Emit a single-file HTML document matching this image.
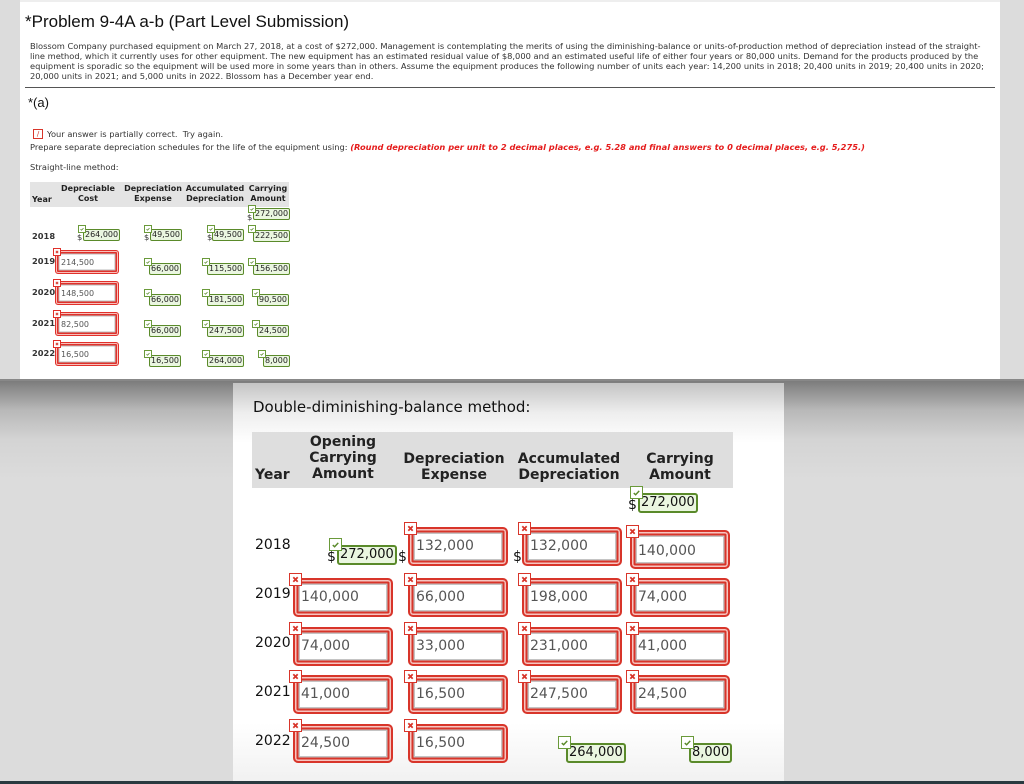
<!DOCTYPE html>
<html><head><meta charset="utf-8"><style>
*{margin:0;padding:0;box-sizing:border-box}
body{width:1024px;height:784px;position:relative;overflow:hidden;background:#dcdcdc;font-family:"DejaVu Sans","Liberation Sans",sans-serif;color:#222}
.a{position:absolute;white-space:nowrap}
#top{position:absolute;left:20px;top:0;width:980px;height:380px;background:#fff;border-top:2px solid #eee}
#bg{position:absolute;left:0;top:380px;width:1024px;height:404px;background:linear-gradient(#7a7a7a 0px,#b8b8b8 30px,#d4d4d4 60px,#dcdcdc 100px)}
#pan{position:absolute;left:233px;top:383px;width:551px;height:399px;background:linear-gradient(#c4c4c4 0px,#eee 30px,#fff 60px,#fff 340px,#f1f1f1 399px)}
#bl{position:absolute;left:0;top:781px;width:1024px;height:3px;background:#2a3a40}
.p{font-size:8.3px;color:#333;line-height:10px}
.th{font-weight:bold;text-align:center;line-height:10px;font-size:8px}
.g{position:absolute;height:12px;border:1.5px solid #5a8a2a;border-radius:2px;background:#eaf6e0;font-size:8px;line-height:9px;padding:0 1px;color:#222;text-align:left}
.c,.x,.C,.X{position:absolute;background:#fff;z-index:5}
.c{width:8px;height:8px;border:1px solid #6a9a3a}
.x{width:8px;height:8px;border:1px solid #e0302a}
.C{width:13px;height:13px;border:1.5px solid #6a9a3a}
.X{width:13px;height:13px;border:1.5px solid #d8352a}
.c svg,.x svg,.C svg,.X svg{position:absolute;left:0;top:0;width:100%;height:100%}
.r{position:absolute;width:64px;height:24px;border:1.5px solid #e0302a;border-radius:3px;box-shadow:inset 0 0 0 1px #f8c0bb,inset 0 0 0 2.5px #e0302a,inset 0 0 0 3.5px #bbb;background:#fff;font-size:8px;color:#555;padding:7px 0 0 5px}
.G{position:absolute;height:20px;border:2px solid #5a8a2a;border-radius:3px;background:#eaf6e0;font-size:13px;line-height:16px;padding:0 1px;color:#111}
.R{position:absolute;width:100px;height:39px;border:2px solid #d8352a;border-radius:5px;box-shadow:inset 0 0 0 1.5px #f6c5c0,inset 0 0 0 3.5px #d8352a,inset 0 0 0 5px #c4c4c4;background:#fff;font-size:14px;color:#555;padding:9px 0 0 6px}
.yr{position:absolute;font-size:14px;color:#111}
.s{position:absolute;font-size:14px;color:#111}
.TH{font-weight:bold;text-align:center;font-size:14px;line-height:16px}
</style></head><body>
<svg width="0" height="0" style="position:absolute"><defs>
<symbol id="ck" viewBox="0 0 10 10"><path d="M2.5 5.5 L4.2 7 L7.5 3.5" fill="none" stroke="#5a8a2a" stroke-width="1.3"/></symbol>
<symbol id="xx" viewBox="0 0 10 10"><path d="M3 3 L7 7 M7 3 L3 7" fill="none" stroke="#d8352a" stroke-width="1.6"/></symbol>
</defs></svg>
<div id="top">
<div class="a" style="left:5px;top:10px;font-family:'Liberation Sans',sans-serif;font-size:17px;color:#111">*Problem 9-4A a-b (Part Level Submission)</div>
<div class="a p" style="left:10px;top:39px">Blossom Company purchased equipment on March 27, 2018, at a cost of $272,000. Management is contemplating the merits of using the diminishing-balance or units-of-production method of depreciation instead of the straight-<br>line method, which it currently uses for other equipment. The new equipment has an estimated residual value of $8,000 and an estimated useful life of either four years or 80,000 units. Demand for the products produced by the<br>equipment is sporadic so the equipment will be used more in some years than in others. Assume the equipment produces the following number of units each year: 14,200 units in 2018; 20,400 units in 2019; 20,400 units in 2020;<br>20,000 units in 2021; and 5,000 units in 2022. Blossom has a December year end.</div>
<div class="a" style="left:5px;top:85px;width:970px;height:1px;background:#555"></div>
<div class="a" style="left:8px;top:93px;font-family:'Liberation Sans',sans-serif;font-size:13px;color:#111">*(a)</div>
<div class="a" style="left:13px;top:127px;width:10px;height:10px;border:1px solid #d8352a;font-size:7px;line-height:8px;text-align:center;color:#d8352a">/</div>
<div class="a p" style="left:27px;top:127px">Your answer is partially correct.&nbsp; Try again.</div>
<div class="a p" style="left:10px;top:140px">Prepare separate depreciation schedules for the life of the equipment using: <b style="color:#e51c1c;font-style:italic">(Round depreciation per unit to 2 decimal places, e.g. 5.28 and final answers to 0 decimal places, e.g. 5,275.)</b></div>
<div class="a p" style="left:10px;top:160px">Straight-line method:</div>
<div class="a" style="left:10px;top:180px;width:259px;height:25px;background:#e4e4e4"></div>
<div class="a th" style="left:12px;top:193px">Year</div>
<div class="a th" style="left:40px;top:182px;width:56px">Depreciable<br>Cost</div>
<div class="a th" style="left:102px;top:182px;width:62px">Depreciation<br>Expense</div>
<div class="a th" style="left:164px;top:182px;width:62px">Accumulated<br>Depreciation</div>
<div class="a th" style="left:226px;top:182px;width:44px">Carrying<br>Amount</div>
</div>
<div style="position:absolute;left:0;top:0">
<div class="c" style="left:248px;top:205px"><svg><use href="#ck"/></svg></div><div class="a p" style="left:247px;top:212px">$</div><div class="g" style="left:253px;top:208px">272,000</div>
<div class="a p" style="left:32px;top:231px;font-weight:bold;color:#333">2018</div>
<div class="c" style="left:78px;top:225px"><svg><use href="#ck"/></svg></div><div class="a p" style="left:77px;top:232px">$</div><div class="g" style="left:83px;top:229px">264,000</div>
<div class="c" style="left:144px;top:225px"><svg><use href="#ck"/></svg></div><div class="a p" style="left:144px;top:232px">$</div><div class="g" style="left:150px;top:229px">49,500</div>
<div class="c" style="left:207px;top:225px"><svg><use href="#ck"/></svg></div><div class="a p" style="left:207px;top:232px">$</div><div class="g" style="left:212px;top:229px">49,500</div>
<div class="c" style="left:248px;top:225px"><svg><use href="#ck"/></svg></div><div class="g" style="left:253px;top:230px">222,500</div>

<div class="a p" style="left:32px;top:256px;font-weight:bold;color:#333">2019</div>
<div class="x" style="left:53px;top:248px"><svg><use href="#xx"/></svg></div><div class="r" style="left:55px;top:250px">214,500</div>
<div class="c" style="left:144px;top:258px"><svg><use href="#ck"/></svg></div><div class="g" style="left:149px;top:263px">66,000</div>
<div class="c" style="left:202px;top:258px"><svg><use href="#ck"/></svg></div><div class="g" style="left:207px;top:263px">115,500</div>
<div class="c" style="left:248px;top:258px"><svg><use href="#ck"/></svg></div><div class="g" style="left:253px;top:263px">156,500</div>

<div class="a p" style="left:32px;top:287px;font-weight:bold;color:#333">2020</div>
<div class="x" style="left:53px;top:279px"><svg><use href="#xx"/></svg></div><div class="r" style="left:55px;top:281px">148,500</div>
<div class="c" style="left:144px;top:289px"><svg><use href="#ck"/></svg></div><div class="g" style="left:149px;top:294px">66,000</div>
<div class="c" style="left:202px;top:289px"><svg><use href="#ck"/></svg></div><div class="g" style="left:207px;top:294px">181,500</div>
<div class="c" style="left:252px;top:289px"><svg><use href="#ck"/></svg></div><div class="g" style="left:257px;top:294px">90,500</div>

<div class="a p" style="left:32px;top:318px;font-weight:bold;color:#333">2021</div>
<div class="x" style="left:53px;top:310px"><svg><use href="#xx"/></svg></div><div class="r" style="left:55px;top:312px">82,500</div>
<div class="c" style="left:144px;top:320px"><svg><use href="#ck"/></svg></div><div class="g" style="left:149px;top:325px">66,000</div>
<div class="c" style="left:202px;top:320px"><svg><use href="#ck"/></svg></div><div class="g" style="left:207px;top:325px">247,500</div>
<div class="c" style="left:252px;top:320px"><svg><use href="#ck"/></svg></div><div class="g" style="left:257px;top:325px">24,500</div>

<div class="a p" style="left:32px;top:348px;font-weight:bold;color:#333">2022</div>
<div class="x" style="left:53px;top:340px"><svg><use href="#xx"/></svg></div><div class="r" style="left:55px;top:342px">16,500</div>
<div class="c" style="left:144px;top:350px"><svg><use href="#ck"/></svg></div><div class="g" style="left:149px;top:355px">16,500</div>
<div class="c" style="left:202px;top:350px"><svg><use href="#ck"/></svg></div><div class="g" style="left:207px;top:355px">264,000</div>
<div class="c" style="left:258px;top:350px"><svg><use href="#ck"/></svg></div><div class="g" style="left:263px;top:355px">8,000</div>
</div>

<div id="bg"></div>
<div id="pan"></div>
<div id="bl"></div>
<div class="a" style="left:0;top:379px;width:1024px;height:2px;background:#888"></div>

<div class="a" style="left:253px;top:398px;font-size:15px;color:#111">Double-diminishing-balance method:</div>
<div class="a" style="left:252px;top:432px;width:481px;height:56px;background:#dedede"></div>
<div class="a TH" style="left:255px;top:467px">Year</div>
<div class="a TH" style="left:303px;top:434px;width:80px">Opening<br>Carrying<br>Amount</div>
<div class="a TH" style="left:400px;top:451px;width:108px">Depreciation<br>Expense</div>
<div class="a TH" style="left:514px;top:451px;width:110px">Accumulated<br>Depreciation</div>
<div class="a TH" style="left:630px;top:451px;width:100px">Carrying<br>Amount</div>

<div class="C" style="left:630px;top:486px"><svg><use href="#ck"/></svg></div><div class="s" style="left:628px;top:497px">$</div><div class="G" style="left:638px;top:493px">272,000</div>

<div class="yr" style="left:255px;top:537px">2018</div>
<div class="C" style="left:329px;top:538px"><svg><use href="#ck"/></svg></div><div class="s" style="left:327px;top:549px">$</div><div class="G" style="left:337px;top:545px">272,000</div>
<div class="s" style="left:398px;top:549px">$</div><div class="X" style="left:404px;top:522px"><svg><use href="#xx"/></svg></div><div class="R" style="left:408px;top:527px">132,000</div>
<div class="s" style="left:513px;top:549px">$</div><div class="X" style="left:518px;top:522px"><svg><use href="#xx"/></svg></div><div class="R" style="left:522px;top:527px">132,000</div>
<div class="X" style="left:626px;top:525px"><svg><use href="#xx"/></svg></div><div class="R" style="left:630px;top:530px;padding-top:11px">140,000</div>

<div class="yr" style="left:255px;top:586px">2019</div>
<div class="X" style="left:289px;top:573px"><svg><use href="#xx"/></svg></div><div class="R" style="left:293px;top:578px">140,000</div>
<div class="X" style="left:404px;top:573px"><svg><use href="#xx"/></svg></div><div class="R" style="left:408px;top:578px">66,000</div>
<div class="X" style="left:518px;top:573px"><svg><use href="#xx"/></svg></div><div class="R" style="left:522px;top:578px">198,000</div>
<div class="X" style="left:626px;top:573px"><svg><use href="#xx"/></svg></div><div class="R" style="left:630px;top:578px">74,000</div>

<div class="yr" style="left:255px;top:635px">2020</div>
<div class="X" style="left:289px;top:622px"><svg><use href="#xx"/></svg></div><div class="R" style="left:293px;top:627px">74,000</div>
<div class="X" style="left:404px;top:622px"><svg><use href="#xx"/></svg></div><div class="R" style="left:408px;top:627px">33,000</div>
<div class="X" style="left:518px;top:622px"><svg><use href="#xx"/></svg></div><div class="R" style="left:522px;top:627px">231,000</div>
<div class="X" style="left:626px;top:622px"><svg><use href="#xx"/></svg></div><div class="R" style="left:630px;top:627px">41,000</div>

<div class="yr" style="left:255px;top:684px">2021</div>
<div class="X" style="left:289px;top:670px"><svg><use href="#xx"/></svg></div><div class="R" style="left:293px;top:675px">41,000</div>
<div class="X" style="left:404px;top:670px"><svg><use href="#xx"/></svg></div><div class="R" style="left:408px;top:675px">16,500</div>
<div class="X" style="left:518px;top:670px"><svg><use href="#xx"/></svg></div><div class="R" style="left:522px;top:675px">247,500</div>
<div class="X" style="left:626px;top:670px"><svg><use href="#xx"/></svg></div><div class="R" style="left:630px;top:675px">24,500</div>

<div class="yr" style="left:255px;top:733px">2022</div>
<div class="X" style="left:289px;top:719px"><svg><use href="#xx"/></svg></div><div class="R" style="left:293px;top:724px">24,500</div>
<div class="X" style="left:404px;top:719px"><svg><use href="#xx"/></svg></div><div class="R" style="left:408px;top:724px">16,500</div>
<div class="C" style="left:558px;top:736px"><svg><use href="#ck"/></svg></div><div class="G" style="left:566px;top:743px">264,000</div>
<div class="C" style="left:681px;top:736px"><svg><use href="#ck"/></svg></div><div class="G" style="left:689px;top:743px">8,000</div>
</body></html>
